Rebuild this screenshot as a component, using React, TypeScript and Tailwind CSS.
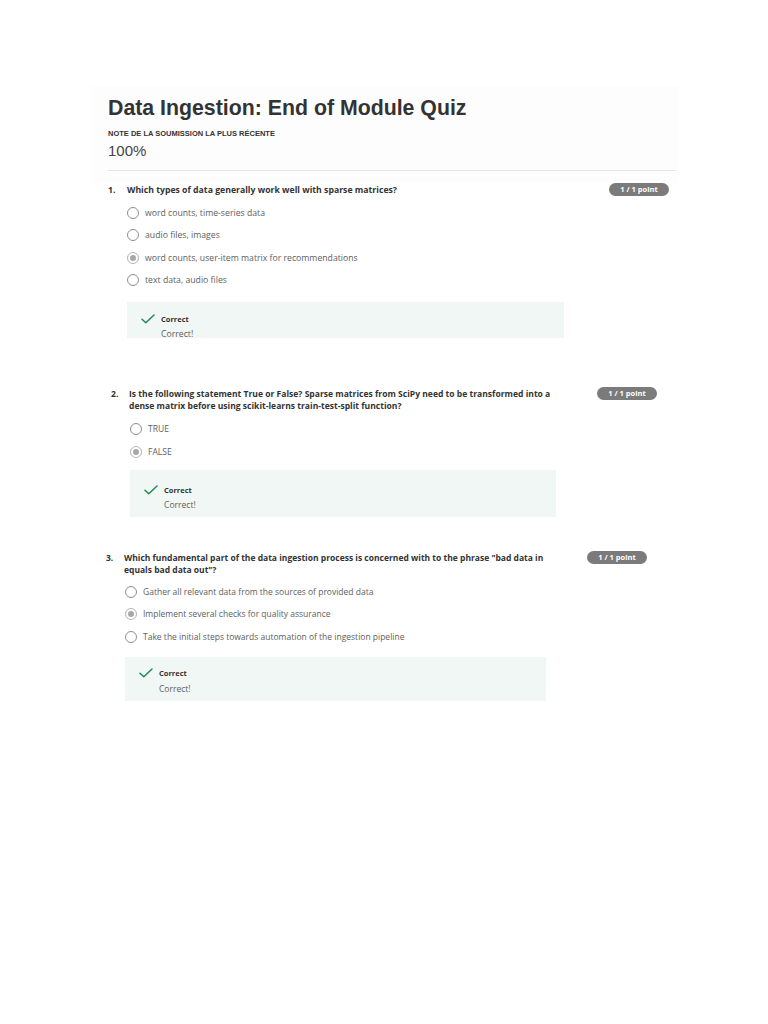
import React from 'react';

type Option = { label: string; selected?: boolean };

type Question = {
  num: string;
  lines: string[];
  options: Option[];
  // per-section layout (the scan is a little skewed from block to block)
  left: string;
  top: string;
  size: string;
  numW: string;
  textW: string;
  optTop: string;
  boxTop: string;
  boxW: string;
  boxPad: string;
  boxH: string;
};

const questions: Question[] = [
  {
    num: '1.',
    lines: ['Which types of data generally work well with sparse matrices?'],
    options: [
      { label: 'word counts, time-series data' },
      { label: 'audio files, images' },
      { label: 'word counts, user-item matrix for recommendations', selected: true },
      { label: 'text data, audio files' },
    ],
    left: 'ml-[108px]',
    top: 'mt-[13px]',
    size: 'text-[8.7px]',
    numW: 'w-[19px]',
    textW: 'w-[482px]',
    optTop: 'mt-[6px]',
    boxTop: 'mt-[11px]',
    boxW: 'w-[437px]',
    boxPad: 'pt-[12px]',
    boxH: 'h-[36px]',
  },
  {
    num: '2.',
    lines: [
      'Is the following statement True or False? Sparse matrices from SciPy need to be transformed into a',
      'dense matrix before using scikit-learns train-test-split function?',
    ],
    options: [{ label: 'TRUE' }, { label: 'FALSE', selected: true }],
    left: 'ml-[111px]',
    top: 'mt-[50px]',
    size: 'text-[8.55px]',
    numW: 'w-[18px]',
    textW: 'w-[468px]',
    optTop: 'mt-[6px]',
    boxTop: 'mt-[7px]',
    boxW: 'w-[426px]',
    boxPad: 'pt-[15px]',
    boxH: 'h-[47px]',
  },
  {
    num: '3.',
    lines: [
      'Which fundamental part of the data ingestion process is concerned with to the phrase "bad data in',
      'equals bad data out"?',
    ],
    options: [
      { label: 'Gather all relevant data from the sources of provided data' },
      { label: 'Implement several checks for quality assurance', selected: true },
      { label: 'Take the initial steps towards automation of the ingestion pipeline' },
    ],
    left: 'ml-[106px]',
    top: 'mt-[35px]',
    size: 'text-[8.5px]',
    numW: 'w-[18px]',
    textW: 'w-[463px]',
    optTop: 'mt-[5px]',
    boxTop: 'mt-[9px]',
    boxW: 'w-[421px]',
    boxPad: 'pt-[11px]',
    boxH: 'h-[44px]',
  },
];

function Radio({ selected }: { selected?: boolean }) {
  return (
    <span
      className={`flex h-[12px] w-[12px] shrink-0 items-center justify-center rounded-full border bg-white ${
        selected ? 'border-[#b5b5b5]' : 'border-[#8f8f8f]'
      }`}
    >
      {selected && <span className="h-[6px] w-[6px] rounded-full bg-[#a8a8a8]" />}
    </span>
  );
}

function Check() {
  return (
    <svg width="14" height="10" viewBox="0 0 14 10" fill="none" className="shrink-0">
      <path d="M1 5.2 L4.8 8.8 L13 1" stroke="#1e8a55" strokeWidth="1.5" strokeLinecap="round" strokeLinejoin="round" />
    </svg>
  );
}

function QuestionBlock({ q }: { q: Question }) {
  return (
    <section className={`${q.left} ${q.top}`}>
      <div className="flex items-start">
        <span className={`${q.numW} shrink-0 ${q.size} font-bold leading-[12px] text-[#333]`}>{q.num}</span>
        <p className={`${q.textW} shrink-0 ${q.size} font-bold leading-[12px] text-[#333]`}>
          {q.lines.map((l, i) => (
            <React.Fragment key={i}>
              {i > 0 && <br />}
              {l}
            </React.Fragment>
          ))}
        </p>
        <span className="mt-[-1px] flex h-[13px] w-[60px] items-center justify-center rounded-full bg-[#7b7b7b] text-[7.5px] font-bold text-white">
          1 / 1 point
        </span>
      </div>

      <div className={`${q.optTop} pl-[19px]`}>
        {q.options.map((o) => (
          <div key={o.label} className="flex h-[22.3px] items-center gap-[6px]">
            <Radio selected={o.selected} />
            <span className={`${q.size} leading-[12px] text-[#5e5e5e]`}>{o.label}</span>
          </div>
        ))}
      </div>

      <div className={`${q.boxTop} ml-[19px] ${q.boxW} ${q.boxH} ${q.boxPad} bg-[#f1f7f4] pl-[14px]`}>
        <div className="flex items-start gap-[6px]">
          <Check />
          <div>
            <div className="text-[7.5px] font-bold leading-[10px] text-[#333]">Correct</div>
            <div className={`mt-[5px] ${q.size} leading-[11px] text-[#5e5e5e]`}>Correct!</div>
          </div>
        </div>
      </div>
    </section>
  );
}

export default function App() {
  return (
    <div className="min-h-[1024px] w-[768px] bg-white pt-[86px]" style={{ fontFamily: '"Open Sans", "Noto Sans", sans-serif' }}>
      <div className="ml-[92px] w-[586px] bg-[#fdfdfd] pb-[12px]">
        <header className="pl-[16px] pt-[10px] font-['Liberation_Sans',Arial,sans-serif]">
          <h1 className="text-[21.3px] font-bold leading-[24px] text-[#333]">Data Ingestion: End of Module Quiz</h1>
          <div className="mt-[9px] text-[7.5px] font-bold leading-[9px] text-[#333]">NOTE DE LA SOUMISSION LA PLUS RÉCENTE</div>
          <div className="mt-[4px] text-[15px] leading-[18px] text-[#444]">100%</div>
        </header>
        <hr className="ml-[16px] mt-[10px] w-[568px] border-[#e6e6e6]" />
      </div>
      <div className="-mt-[12px]">
        {questions.map((q) => (
          <QuestionBlock key={q.num} q={q} />
        ))}
      </div>
    </div>
  );
}
